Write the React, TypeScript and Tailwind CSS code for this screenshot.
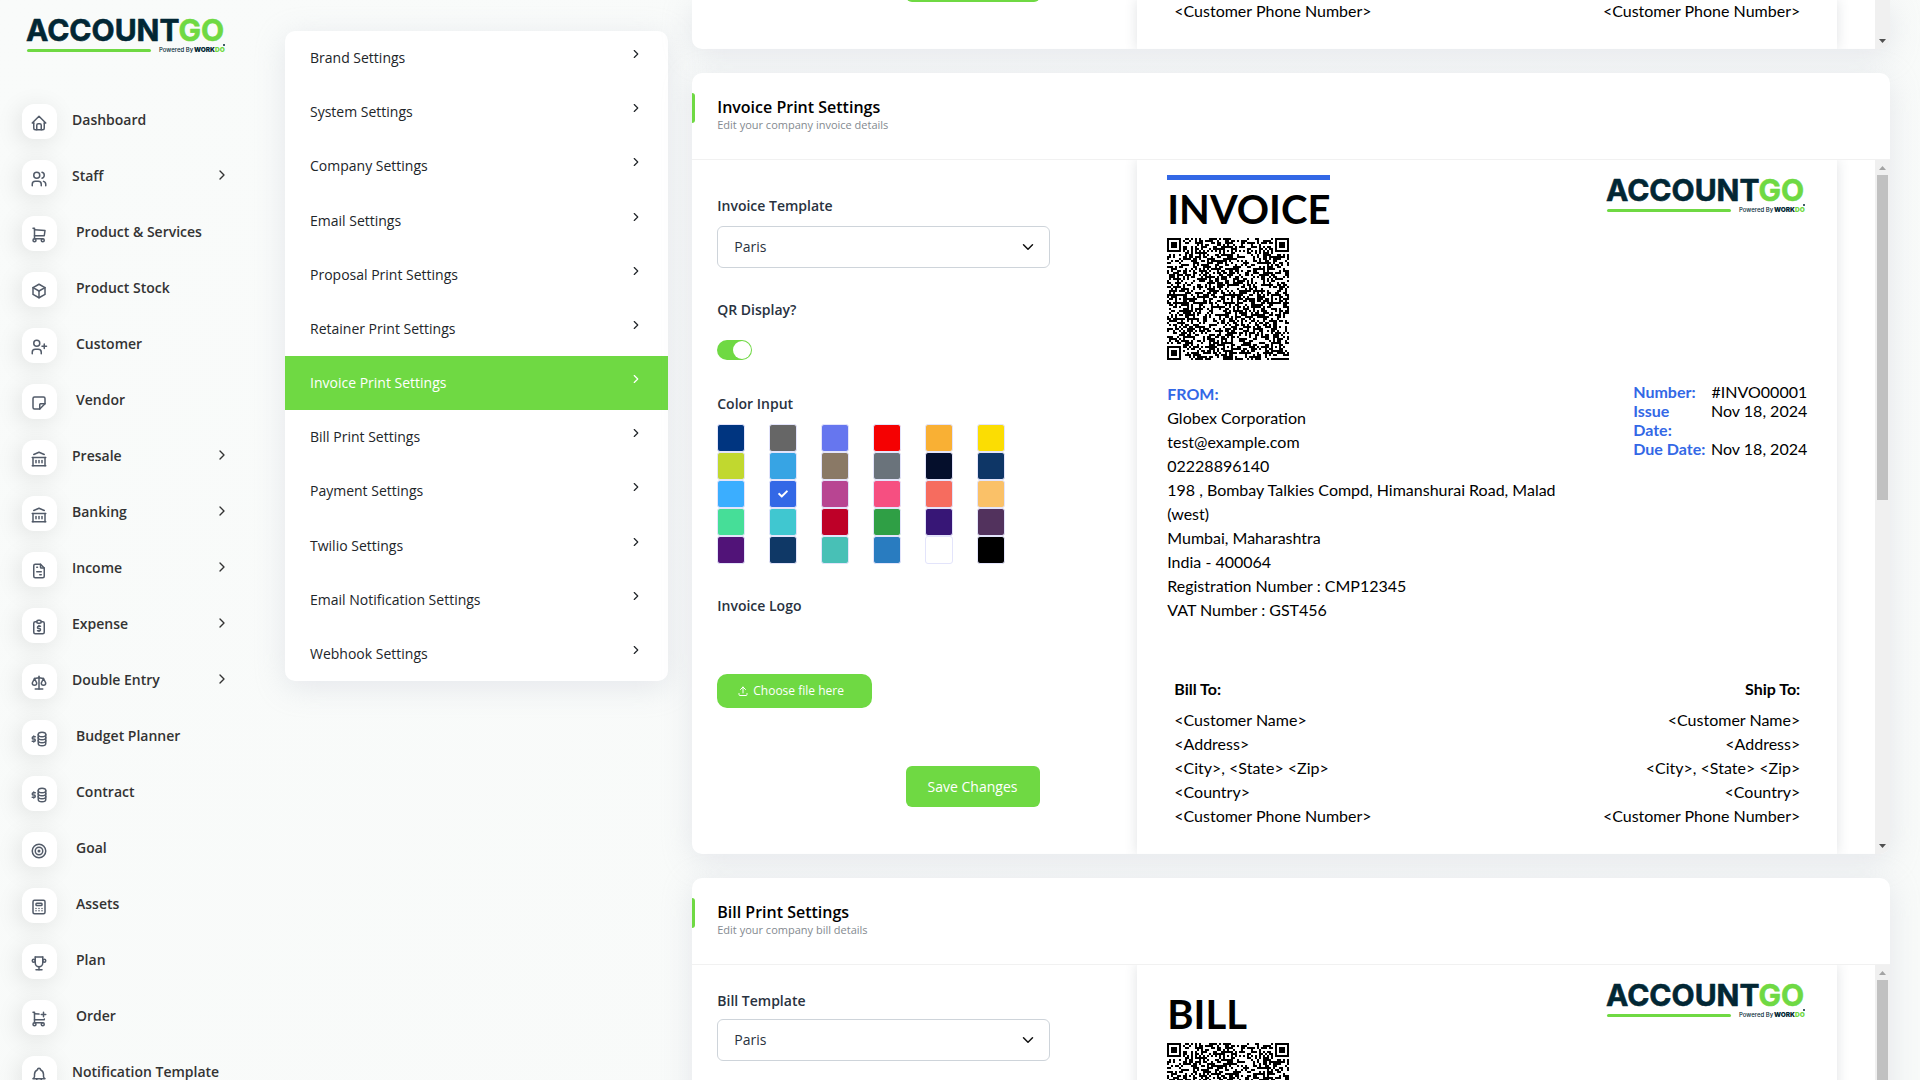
import { useId, useState, type ReactNode } from 'react';
import { FaCheck } from 'react-icons/fa';
import {
  TbBell,
  TbBox,
  TbBuildingBank,
  TbBusinessplan,
  TbCalculator,
  TbChevronRight,
  TbFileInvoice,
  TbHome,
  TbNote,
  TbReportMoney,
  TbScale,
  TbShoppingCart,
  TbTarget,
  TbTrophy,
  TbUpload,
  TbUsers,
} from 'react-icons/tb';

type IconProps = { className?: string };

function OutlineIcon({ className, children }: IconProps & { children: ReactNode }) {
  return (
    <svg
      viewBox="0 0 24 24"
      className={className}
      fill="none"
      stroke="currentColor"
      strokeWidth="2"
      strokeLinecap="round"
      strokeLinejoin="round"
      aria-hidden="true"
    >
      {children}
    </svg>
  );
}

function UserPlusIcon({ className }: IconProps) {
  return (
    <OutlineIcon className={className}>
      <circle cx="9" cy="7" r="4" />
      <path d="M3 21v-2a4 4 0 0 1 4-4h4a4 4 0 0 1 4 4v2" />
      <path d="M16 11h6m-3-3v6" />
    </OutlineIcon>
  );
}

function CartPlusIcon({ className }: IconProps) {
  return (
    <OutlineIcon className={className}>
      <circle cx="6" cy="19" r="2" />
      <circle cx="17" cy="19" r="2" />
      <path d="M17 17H6V3H4" />
      <path d="m6 5 6.005.429m7.138 6.573L19 13H6" />
      <path d="M15 6h6m-3-3v6" />
    </OutlineIcon>
  );
}

type NavItem = {
  label: string;
  icon: (props: IconProps) => ReactNode;
  expandable?: boolean;
  indent?: boolean;
};

const NAV_ITEMS: NavItem[] = [
  { label: 'Dashboard', icon: TbHome },
  { label: 'Staff', icon: TbUsers, expandable: true },
  { label: 'Product & Services', icon: TbShoppingCart, indent: true },
  { label: 'Product Stock', icon: TbBox, indent: true },
  { label: 'Customer', icon: UserPlusIcon, indent: true },
  { label: 'Vendor', icon: TbNote, indent: true },
  { label: 'Presale', icon: TbBuildingBank, expandable: true },
  { label: 'Banking', icon: TbBuildingBank, expandable: true },
  { label: 'Income', icon: TbFileInvoice, expandable: true },
  { label: 'Expense', icon: TbReportMoney, expandable: true },
  { label: 'Double Entry', icon: TbScale, expandable: true },
  { label: 'Budget Planner', icon: TbBusinessplan, indent: true },
  { label: 'Contract', icon: TbBusinessplan, indent: true },
  { label: 'Goal', icon: TbTarget, indent: true },
  { label: 'Assets', icon: TbCalculator, indent: true },
  { label: 'Plan', icon: TbTrophy, indent: true },
  { label: 'Order', icon: CartPlusIcon, indent: true },
  { label: 'Notification Template', icon: TbBell },
];

const SETTINGS = [
  'Brand Settings',
  'System Settings',
  'Company Settings',
  'Email Settings',
  'Proposal Print Settings',
  'Retainer Print Settings',
  'Invoice Print Settings',
  'Bill Print Settings',
  'Payment Settings',
  'Twilio Settings',
  'Email Notification Settings',
  'Webhook Settings',
];

const COLORS = [
  '#003580', '#666666', '#6676ef', '#f50102', '#f9b034', '#fbdd03',
  '#c1d82f', '#37a4e4', '#8a7966', '#6a737b', '#050f2c', '#0e3666',
  '#3baeff', '#3368e6', '#b84592', '#f64f81', '#f66c5f', '#fac168',
  '#46de98', '#40c7d0', '#be0028', '#2f9f45', '#371676', '#52325d',
  '#511378', '#0f3866', '#48c0b6', '#297cc0', '#ffffff', '#000000',
];

const COMPANY_LINES = [
  'Globex Corporation',
  'test@example.com',
  '02228896140',
  '198 , Bombay Talkies Compd, Himanshurai Road, Malad (west)',
  'Mumbai, Maharashtra',
  'India - 400064',
  'Registration Number : CMP12345',
  'VAT Number : GST456',
];

const CUSTOMER_LINES = [
  '<Customer Name>',
  '<Address>',
  '<City>, <State> <Zip>',
  '<Country>',
  '<Customer Phone Number>',
];

const QR_SIZE = 61;

function ring(x: number, y: number, cx: number, cy: number) {
  return Math.max(Math.abs(x - cx), Math.abs(y - cy));
}

function buildQrPath() {
  const finders = [[3, 3], [QR_SIZE - 4, 3], [3, QR_SIZE - 4]];
  const aligns = [[30, 6], [6, 30], [30, 30], [54, 30], [30, 54], [54, 54]];
  let seed = 20241118;
  let d = '';
  for (let y = 0; y < QR_SIZE; y++) {
    for (let x = 0; x < QR_SIZE; x++) {
      seed = (Math.imul(seed, 1664525) + 1013904223) >>> 0;
      let dark = seed / 4294967296 < 0.5;
      if (x === 6) dark = y % 2 === 0;
      if (y === 6) dark = x % 2 === 0;
      for (const [cx, cy] of aligns) {
        const r = ring(x, y, cx, cy);
        if (r <= 2) dark = r !== 1;
      }
      for (const [cx, cy] of finders) {
        const r = ring(x, y, cx, cy);
        if (r <= 4) dark = r !== 2 && r !== 4;
      }
      if (dark) d += `M${x} ${y}h1v1h-1z`;
    }
  }
  return d;
}

const QR_PATH = buildQrPath();

function QrCode() {
  return (
    <svg viewBox="0 0 61 61" className="h-[122px] w-[122px]" shapeRendering="crispEdges" role="img" aria-label="QR code">
      <path d={QR_PATH} fill="#000" />
    </svg>
  );
}

function Logo() {
  return (
    <svg viewBox="0 0 200 36" className="h-9 w-[200px] overflow-visible" role="img" aria-label="AccountGo">
      <text
        x="-1"
        y="23"
        fontFamily="Inter, sans-serif"
        fontWeight="700"
        fontSize="30"
        fill="#022734"
        stroke="#022734"
        strokeWidth="0.6"
        strokeLinejoin="round"
      >
        ACCOUNT
        <tspan fill="#6fd943" stroke="#6fd943">
          GO
        </tspan>
      </text>
      <rect x="0" y="31" width="124" height="3" rx="1.5" fill="#6fd943" />
      <text x="132" y="34" fontFamily="Inter, sans-serif" fontWeight="500" fontSize="6" fill="#022734">
        Powered By
      </text>
      <text x="167" y="34" fontFamily="Inter, sans-serif" fontWeight="900" fontSize="6.5" fill="#022734">
        WORK<tspan fill="#6fd943">DO</tspan>
      </text>
      <circle cx="197" cy="27" r="1" fill="#022734" />
    </svg>
  );
}

function Sidebar() {
  return (
    <aside className="w-[280px] shrink-0">
      <a href="#home" className="block pt-[18px] pl-[27px]">
        <Logo />
      </a>
      <nav className="mt-[50px] pl-[22px]">
        <ul className="flex flex-col gap-[21px]">
          {NAV_ITEMS.map(({ label, icon: Icon, expandable, indent }) => (
            <li key={label}>
              <a href={`#${label}`} className="flex h-[35px] items-start pr-[50px] text-sm leading-5 font-semibold text-[#333333]">
                <span className="flex h-[35px] w-[35px] shrink-0 items-center justify-center rounded-xl bg-white pt-[3px] pr-px text-[#525b69] shadow-[-3px_4px_23px_rgba(0,0,0,0.1)]">
                  <Icon className="h-[18px] w-[18px]" />
                </span>
                <span className={`grow whitespace-nowrap pt-1.5 ${indent ? 'pl-[19px]' : 'pl-[15px]'}`}>{label}</span>
                {expandable && <TbChevronRight className="mt-[7px] h-4 w-4 shrink-0" />}
              </a>
            </li>
          ))}
        </ul>
      </nav>
    </aside>
  );
}

function SettingsMenu() {
  return (
    <nav className="grid min-h-[650px] auto-rows-fr overflow-hidden rounded-[10px] bg-white shadow-[0_6px_30px_rgba(182,186,203,0.3)]">
      {SETTINGS.map((label) => {
        const active = label === 'Invoice Print Settings';
        return (
          <a
            key={label}
            href={`#${label}`}
            className={`flex items-start justify-between px-[25px] pt-4 text-sm leading-[22px] ${
              active ? 'bg-[#6fd943] text-white' : 'text-[#212529]'
            }`}
          >
            {label}
            <TbChevronRight className="h-3.5 w-3.5" />
          </a>
        );
      })}
    </nav>
  );
}

function FieldLabel({ htmlFor, children }: { htmlFor: string; children: ReactNode }) {
  return (
    <label htmlFor={htmlFor} className="block text-sm leading-5 font-semibold text-[#293240]">
      {children}
    </label>
  );
}

function TemplateSelect({ label, compact }: { label: string; compact?: boolean }) {
  const id = useId();
  return (
    <div className={`flex flex-col ${compact ? 'gap-2' : 'gap-2.5'}`}>
      <FieldLabel htmlFor={id}>{label}</FieldLabel>
      <div className="relative">
        <select
          id={id}
          className="block h-[42px] w-full appearance-none rounded-md border border-[#ced4da] bg-white px-4 text-sm text-[#293240]"
        >
          <option>Paris</option>
        </select>
        <svg viewBox="0 0 16 16" className="pointer-events-none absolute top-[15px] right-4 h-3 w-3" aria-hidden="true">
          <path d="m2 5 6 6 6-6" fill="none" stroke="#111" strokeWidth="2" strokeLinecap="round" strokeLinejoin="round" />
        </svg>
      </div>
    </div>
  );
}

function ColorPicker() {
  const [selected, setSelected] = useState('#3368e6');
  return (
    <fieldset>
      <legend className="text-sm leading-5 font-semibold text-[#293240]">Color Input</legend>
      <div className="mt-2.5 grid w-fit grid-cols-6 gap-x-6">
        {COLORS.map((color) => (
          <label key={color} className="relative h-7 w-7">
            <input
              type="radio"
              name="invoice-color"
              value={color}
              aria-label={color}
              checked={selected === color}
              onChange={() => setSelected(color)}
              className="block h-7 w-7 appearance-none rounded-[3px] border border-[#e3e4fb]"
              style={{ backgroundColor: color }}
            />
            {selected === color && <FaCheck className="absolute top-[9px] left-[9px] h-2.5 w-2.5 text-white" />}
          </label>
        ))}
      </div>
    </fieldset>
  );
}

function SaveButton() {
  return (
    <button type="button" className="h-[41px] w-[134px] shrink-0 rounded-md bg-[#6fd943] text-sm text-white">
      Save Changes
    </button>
  );
}

function ScrollBar({ showUp = true, thumb = true }: { showUp?: boolean; thumb?: boolean }) {
  return (
    <div className="flex w-[15px] shrink-0 flex-col items-center bg-[#f0f0f0]" aria-hidden="true">
      {showUp && (
        <svg viewBox="0 0 15 15" className="h-[15px] w-[15px] shrink-0">
          <path d="M4 10h7L7.5 6z" fill="#a3a3a3" />
        </svg>
      )}
      {thumb && <div className="h-[325px] w-[11px] shrink-0 bg-[#c1c1c1]" />}
      <svg viewBox="0 0 15 15" className="mt-auto h-[15px] w-[15px] shrink-0">
        <path d="M4 5h7L7.5 9z" fill="#505050" />
      </svg>
    </div>
  );
}

function Preview({ children, scrollBar }: { children?: ReactNode; scrollBar: ReactNode }) {
  return (
    <div className="flex min-w-0 grow overflow-hidden">
      <div className="flex grow justify-center overflow-hidden pl-6">
        <div className="w-[700px] bg-white text-base leading-6 text-black font-['Lato',sans-serif] shadow-[0_0_12px_rgba(60,72,88,0.16)] [text-rendering:optimizeLegibility]">
          {children}
        </div>
      </div>
      {scrollBar}
    </div>
  );
}

function DocumentHead({ title, accent }: { title: string; accent?: boolean }) {
  return (
    <div className="flex items-start justify-between px-[30px] pt-[15px]">
      <div>
        <div className={`w-fit border-t-[5px] pt-1 pb-1 ${accent ? 'border-[#3368e6]' : 'border-white'}`}>
          <h2 className="text-[40px] leading-[50px] font-bold">{title}</h2>
        </div>
        <QrCode />
      </div>
      <div className="pt-[3px]">
        <Logo />
      </div>
    </div>
  );
}

function PrintCard({ title, subtitle, children }: { title: string; subtitle: string; children: ReactNode }) {
  return (
    <section className="flex shrink-0 flex-col overflow-hidden rounded-[10px] bg-white shadow-[0_6px_30px_rgba(182,186,203,0.3)]">
      <header className="flex h-[87px] items-start border-b border-[#f1f1f1] pt-5">
        <span className="h-[30px] w-[3px] rounded-r-sm bg-[#6fd943]" />
        <div className="pt-[3px] pl-[22px]">
          <h5 className="text-base leading-[22px] font-semibold text-black">{title}</h5>
          <small className="block text-[11px] leading-[14px] text-[#848a90]">{subtitle}</small>
        </div>
      </header>
      <div className="flex h-[694px]">{children}</div>
    </section>
  );
}

function ProposalCardEnd() {
  return (
    <section className="flex h-[49px] shrink-0 overflow-hidden rounded-b-[10px] bg-white shadow-[0_6px_30px_rgba(182,186,203,0.3)]">
      <div className="flex w-[32%] shrink-0 items-end justify-end pr-9 pb-[47px]">
        <SaveButton />
      </div>
      <Preview scrollBar={<ScrollBar showUp={false} thumb={false} />}>
        <div className="flex justify-between px-[37px] leading-[22px]">
          <p>{'<Customer Phone Number>'}</p>
          <p>{'<Customer Phone Number>'}</p>
        </div>
      </Preview>
    </section>
  );
}

function InvoiceForm() {
  return (
    <form className="flex w-[32%] shrink-0 flex-col pt-9 pr-[26px] pl-[25px]">
      <TemplateSelect label="Invoice Template" />
      <div className="mt-8">
        <FieldLabel htmlFor="qr-display">QR Display?</FieldLabel>
        <input
          id="qr-display"
          type="checkbox"
          defaultChecked
          className="mt-5 block h-5 w-[35px] appearance-none rounded-full bg-gray-300 before:mt-px before:ml-px before:block before:h-[18px] before:w-[18px] before:rounded-full before:bg-white checked:bg-[#6fd943] checked:before:ml-4"
        />
      </div>
      <div className="mt-[34px]">
        <ColorPicker />
      </div>
      <div className="mt-8 flex flex-col items-start gap-[58px]">
        <span className="text-sm leading-5 font-semibold text-[#293240]">Invoice Logo</span>
        <label className="flex h-[34px] w-[155px] items-center gap-1 rounded-[10px] bg-[#6fd943] pl-5 text-xs text-white">
          <TbUpload className="h-3 w-3" />
          Choose file here
          <input type="file" className="sr-only" />
        </label>
      </div>
      <div className="mt-[58px] flex justify-end pr-2.5">
        <SaveButton />
      </div>
    </form>
  );
}

function InvoicePreview() {
  return (
    <Preview scrollBar={<ScrollBar />}>
      <DocumentHead title="INVOICE" accent />
      <div className="flex items-start justify-between px-[30px] pt-[22px]">
        <div className="w-[400px]">
          <p className="font-bold text-[#3368e6]">FROM:</p>
          {COMPANY_LINES.map((line) => (
            <p key={line}>{line}</p>
          ))}
        </div>
        <table className="w-[174px] leading-[19px]">
          <tbody className="align-top">
            <tr>
              <th className="text-left font-bold text-[#3368e6]">Number:</th>
              <td className="text-right whitespace-nowrap">#INVO00001</td>
            </tr>
            <tr>
              <th className="text-left font-bold text-[#3368e6]">
                Issue
                <br />
                Date:
              </th>
              <td className="text-right whitespace-nowrap">Nov 18, 2024</td>
            </tr>
            <tr>
              <th className="text-left font-bold whitespace-nowrap text-[#3368e6]">Due Date:</th>
              <td className="text-right whitespace-nowrap">Nov 18, 2024</td>
            </tr>
          </tbody>
        </table>
      </div>
      <div className="flex justify-between px-[37px] pt-[55px]">
        <div>
          <p className="pb-[7px] font-bold">Bill To:</p>
          {CUSTOMER_LINES.map((line) => (
            <p key={line}>{line}</p>
          ))}
        </div>
        <div className="text-right">
          <p className="pb-[7px] font-bold">Ship To:</p>
          {CUSTOMER_LINES.map((line) => (
            <p key={line}>{line}</p>
          ))}
        </div>
      </div>
    </Preview>
  );
}

export default function App() {
  return (
    <div className="flex h-screen overflow-hidden bg-linear-to-br from-[#f9fbfa] to-[#f8faf9] font-['Open_Sans',sans-serif]">
      <Sidebar />
      <main className="-ml-[7px] flex min-w-0 grow items-start pr-[18px]">
        <div className="w-1/4 shrink-0 px-3 pt-[31px]">
          <SettingsMenu />
        </div>
        <div className="flex w-3/4 flex-col gap-6 px-3">
          <ProposalCardEnd />
          <PrintCard title="Invoice Print Settings" subtitle="Edit your company invoice details">
            <InvoiceForm />
            <InvoicePreview />
          </PrintCard>
          <PrintCard title="Bill Print Settings" subtitle="Edit your company bill details">
            <form className="w-[32%] shrink-0 pt-[26px] pr-[26px] pl-[25px]">
              <TemplateSelect label="Bill Template" compact />
            </form>
            <Preview scrollBar={<ScrollBar />}>
              <DocumentHead title="BILL" />
            </Preview>
          </PrintCard>
        </div>
      </main>
    </div>
  );
}
